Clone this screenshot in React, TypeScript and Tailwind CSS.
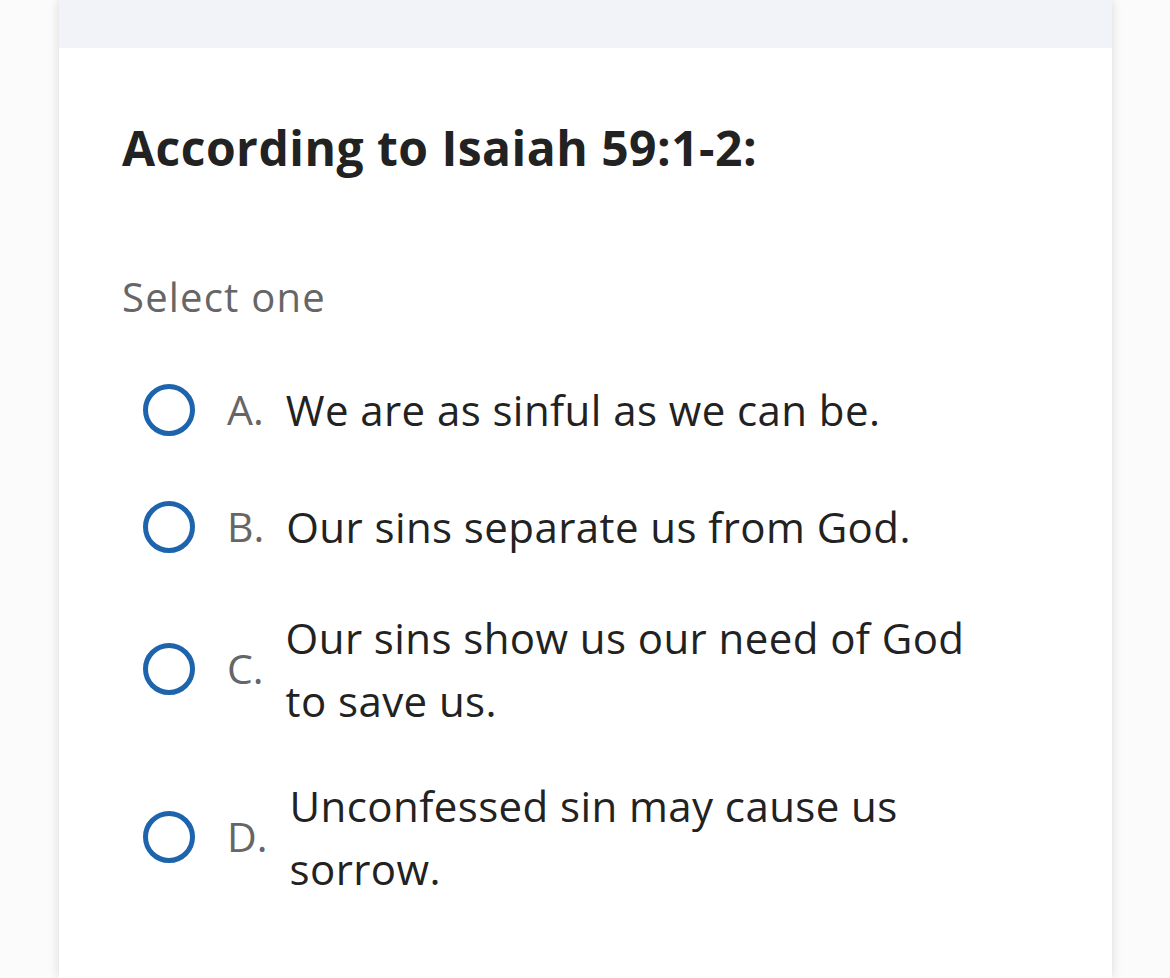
const options = [
    { letter: 'A.', text: 'We are as sinful as we can be.' },
    { letter: 'B.', text: 'Our sins separate us from God.' },
    { letter: 'C.', text: 'Our sins show us our need of God to save us.' },
    { letter: 'D.', text: 'Unconfessed sin may cause us sorrow.' },
];

function App() {
    return (
        <div className="h-[978px] overflow-hidden bg-[#fbfbfb] font-['Open_Sans',sans-serif]">
            <div className="ml-[59px] w-[1053px] h-full bg-white shadow-[0_0_10px_rgba(0,0,0,0.14)]">
                <div className="h-[48px] bg-[#f2f3f8]" />
                <div className="px-[63px]">
                    <h1 className="mt-[70px] text-[48px] leading-[60px] tracking-[0.01em] font-bold text-[#222]">
                        According to Isaiah 59:1-2:
                    </h1>
                    <p className="mt-[93px] text-[40px] leading-[52px] tracking-[0.03em] text-[#666]">Select one</p>

                    <div className="mt-[49px] flex flex-col gap-[42px]">
                        {options.map((opt) => (
                            <div key={opt.letter} className="flex items-center min-h-[75px] pl-[21px]">
                                <div className="h-[52px] w-[52px] rounded-full border-[5px] border-[#1d64ad] shrink-0" />
                                <span className="ml-[32px] text-[41px] text-[#666] shrink-0">{opt.letter}</span>
                                <span className="ml-[22px] max-w-[700px] text-[42px] leading-[63px] tracking-[0.01em] text-[#222]">
                                    {opt.text}
                                </span>
                            </div>
                        ))}
                    </div>
                </div>
            </div>
        </div>
    );
}

export default App;
